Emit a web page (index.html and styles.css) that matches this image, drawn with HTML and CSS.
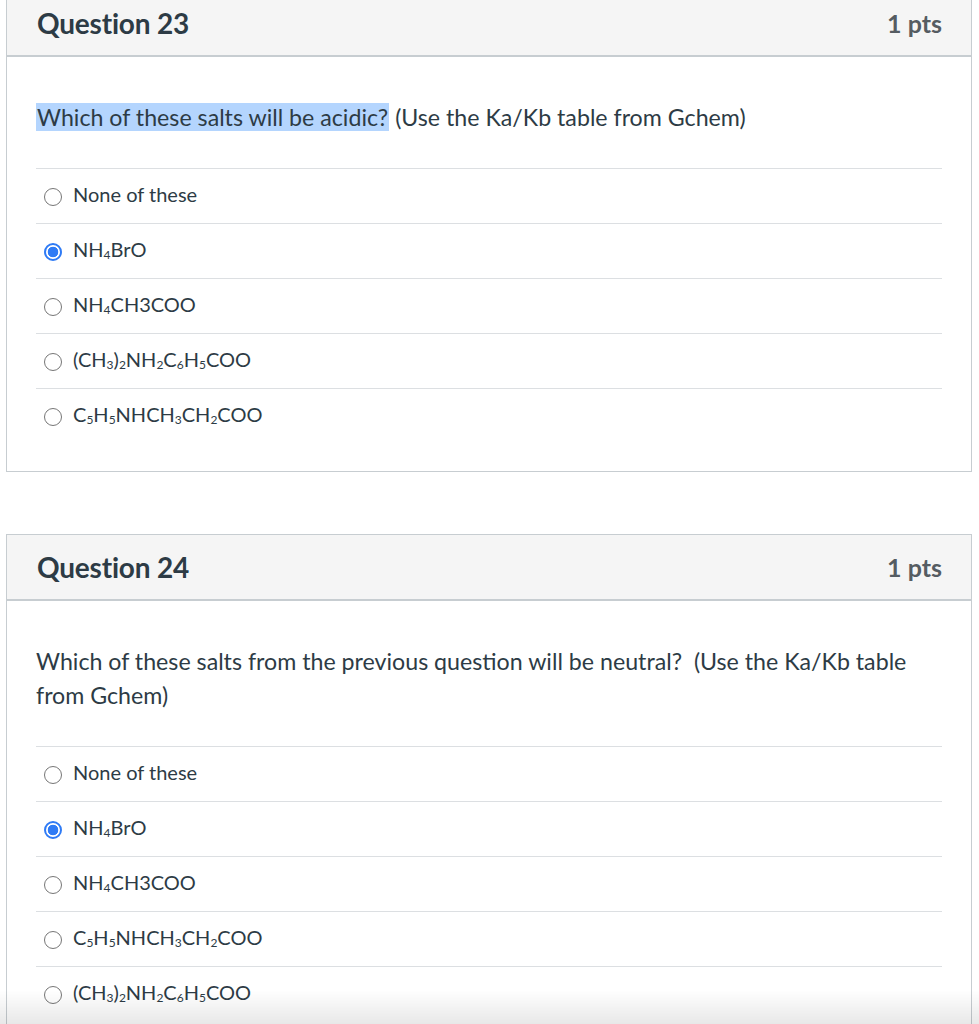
FILE: index.html
```html
<!DOCTYPE html>
<html>
<head>
<meta charset="utf-8">
<link rel="stylesheet" href="styles.css">
</head>
<body>
<div class="page">
  <section class="card first">
    <header class="card-head">
      <h2 class="title">Question 23</h2>
      <span class="pts">1 pts</span>
    </header>
    <div class="card-body">
      <p class="prompt"><span class="sel">Which of these salts will be acidic?</span> (Use the Ka/Kb table from Gchem)</p>
      <ul class="answers">
        <li class="answer"><span class="radio"></span><span class="label">None of these</span></li>
        <li class="answer"><span class="radio checked"></span><span class="label">NH<sub>4</sub>BrO</span></li>
        <li class="answer"><span class="radio"></span><span class="label">NH<sub>4</sub>CH3COO</span></li>
        <li class="answer"><span class="radio"></span><span class="label">(CH<sub>3</sub>)<sub>2</sub>NH<sub>2</sub>C<sub>6</sub>H<sub>5</sub>COO</span></li>
        <li class="answer"><span class="radio"></span><span class="label">C<sub>5</sub>H<sub>5</sub>NHCH<sub>3</sub>CH<sub>2</sub>COO</span></li>
      </ul>
    </div>
  </section>

  <section class="card">
    <header class="card-head">
      <h2 class="title">Question 24</h2>
      <span class="pts">1 pts</span>
    </header>
    <div class="card-body">
      <p class="prompt">Which of these salts from the previous question will be neutral?&nbsp; (Use the Ka/Kb table from Gchem)</p>
      <ul class="answers">
        <li class="answer"><span class="radio"></span><span class="label">None of these</span></li>
        <li class="answer"><span class="radio checked"></span><span class="label">NH<sub>4</sub>BrO</span></li>
        <li class="answer"><span class="radio"></span><span class="label">NH<sub>4</sub>CH3COO</span></li>
        <li class="answer"><span class="radio"></span><span class="label">C<sub>5</sub>H<sub>5</sub>NHCH<sub>3</sub>CH<sub>2</sub>COO</span></li>
        <li class="answer"><span class="radio"></span><span class="label">(CH<sub>3</sub>)<sub>2</sub>NH<sub>2</sub>C<sub>6</sub>H<sub>5</sub>COO</span></li>
      </ul>
    </div>
  </section>
</div>
<div class="bottom-fade"></div>
</body>
</html>
```

FILE: styles.css
```css
html, body {
  margin: 0;
  padding: 0;
  background: #ffffff;
}

body {
  font-family: Lato, "Open Sans", "Liberation Sans", sans-serif;
  color: #2d3b45;
  overflow: hidden;
}

.page {
  padding: 0 7px 0 6px;
}

.card {
  border: 1px solid #c7cdd1;
  margin-top: 62px;
  background: #fff;
}

.card.first {
  margin-top: -10px;
}

.card-head {
  display: flex;
  align-items: center;
  justify-content: space-between;
  height: 64px;
  padding: 0 29px 0 30px;
  background: #f5f5f5;
  border-bottom: 2px solid #c7cdd1;
  box-sizing: content-box;
}

.title {
  margin: 0;
  font-size: 28px;
  font-weight: 700;
  color: #2d3b45;
  letter-spacing: -0.2px;
}

.pts {
  font-size: 25px;
  font-weight: 700;
  color: #555c62;
}

.card-body {
  padding: 43px 29px 28px 29px;
}

.prompt {
  margin: 0 0 34px 0;
  font-size: 23.2px;
  line-height: 34px;
}

.sel {
  background: #b4d5fe;
  padding: 0 1px;
}

.answers {
  list-style: none;
  margin: 0;
  padding: 0;
}

.answer {
  display: flex;
  align-items: center;
  height: 54px;
  border-top: 1px solid #dcdfe2;
  padding-left: 8px;
  font-size: 20px;
}

.radio {
  width: 18px;
  height: 18px;
  border: 1.5px solid #767676;
  border-radius: 50%;
  box-sizing: border-box;
  margin-right: 11px;
  flex: none;
  position: relative;
  top: 1px;
}

.radio.checked {
  border: 2px solid #2f7bf5;
  background: radial-gradient(circle, #2f7bf5 0 5px, #ffffff 5.6px);
}

.label {
  line-height: 26px;
  padding-bottom: 4px;
}

sub {
  font-size: 12px;
  vertical-align: -2px;
  line-height: 0;
}

.bottom-fade {
  position: fixed;
  left: 0;
  right: 0;
  bottom: 0;
  height: 34px;
  background: linear-gradient(rgba(0, 0, 0, 0), rgba(0, 0, 0, 0.09));
  pointer-events: none;
}
```
